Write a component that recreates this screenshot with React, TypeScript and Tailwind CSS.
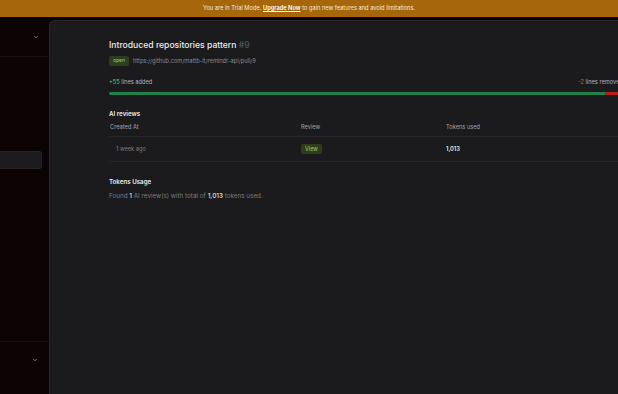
import React from "react";

const Chevron = () => (
  <svg width="6" height="6" viewBox="0 0 24 24" fill="none" stroke="#a1a1aa" strokeWidth="3" strokeLinecap="round" strokeLinejoin="round">
    <path d="m6 9 6 6 6-6" />
  </svg>
);

const App = () => {
  return (
    <div className="flex flex-col h-[394px] w-[618px] overflow-hidden bg-[#0c0404] font-['Inter',sans-serif]">
      {/* Trial banner */}
      <div className="h-[17px] shrink-0 bg-[#a5660c] flex items-center justify-center text-[5.7px] text-[#f7ead6]">
        You are in Trial Mode.&nbsp;<span className="font-semibold underline text-white">Upgrade Now</span>&nbsp;to gain new features and avoid limitations.
      </div>

      <div className="flex flex-1 min-h-0">
        {/* Sidebar */}
        <div className="w-[49px] shrink-0 flex flex-col">
          <div className="h-[40px] flex items-center justify-end pr-[10px] border-b border-[#1a0f0f]">
            <Chevron />
          </div>
          <div className="flex-1 pt-[94px]">
            <div className="h-[18px] w-[42px] bg-[#1c1c1e] rounded-r-[3px] border border-l-0 border-[#2a2222]" />
          </div>
          <div className="h-[37px] mb-[16px] flex items-center justify-end pr-[11px] border-t border-[#1a0f0f]">
            <Chevron />
          </div>
        </div>

        {/* Main panel */}
        <div className="flex-1 mt-[3px] bg-[#1b1b1d] rounded-tl-[6px] border-l border-t border-[#26262a] pl-[59px] pt-[19px] overflow-hidden">
          <div className="w-[514px]">
            <h1 className="text-[8.6px] font-medium text-[#ececec] leading-[11px]">
              Introduced repositories pattern <span className="text-[#4b5563]">#9</span>
            </h1>
            <div className="flex items-center gap-[4px] mt-[5px]">
              <span className="bg-[#2f3d1f] text-[#a6c96a] text-[5px] px-[4px] h-[10px] flex items-center rounded-[2px]">open</span>
              <span className="text-[5.7px] text-[#8a8a8f]">https://github.com/mattb-it/remindr-api/pull/9</span>
            </div>

            <div className="flex justify-between mt-[12px] text-[5.7px] leading-[8px] text-[#b4b4b8]">
              <span><span className="text-[#4ade80]">+55</span> lines added</span>
              <span><span className="text-[#ef4444]">-2</span> lines removed</span>
            </div>
            <div className="flex h-[3px] mt-[6px] rounded-full overflow-hidden">
              <div className="bg-[#23804a]" style={{ width: `${(55 / 57) * 100}%` }} />
              <div className="flex-1 bg-[#b91c1c]" />
            </div>

            <h2 className="mt-[15px] text-[6.2px] leading-[8px] font-semibold text-[#ececec]">AI reviews</h2>
            <div className="mt-[1px] text-[5.7px]">
              <div className="flex h-[18px] items-center text-[#a1a1a6] border-b border-[#26262a]">
                <div className="w-[192px] pl-[1px]">Created At</div>
                <div className="w-[145px]">Review</div>
                <div className="flex-1">Tokens used</div>
              </div>
              <div className="flex h-[25px] items-center border-b border-[#26262a]">
                <div className="w-[192px] pl-[7px] text-[#7c7c82]">1 week ago</div>
                <div className="w-[145px]">
                  <span className="inline-flex items-center h-[10px] px-[4px] bg-[#2f3d1f] text-[#a6c96a] rounded-[2px] text-[5.5px]">View</span>
                </div>
                <div className="flex-1 font-semibold text-[#ececec]">1,013</div>
              </div>
            </div>

            <h2 className="mt-[16px] text-[6.2px] leading-[8px] font-semibold text-[#ececec]">Tokens Usage</h2>
            <p className="mt-[6px] text-[6.3px] leading-[8px] text-[#7c7c82]">
              Found <span className="font-semibold text-[#d4d4d8]">1</span> AI review(s) with total of{" "}
              <span className="font-semibold text-[#d4d4d8]">1,013</span> tokens used.
            </p>
          </div>
        </div>
      </div>
    </div>
  );
};

export default App;
